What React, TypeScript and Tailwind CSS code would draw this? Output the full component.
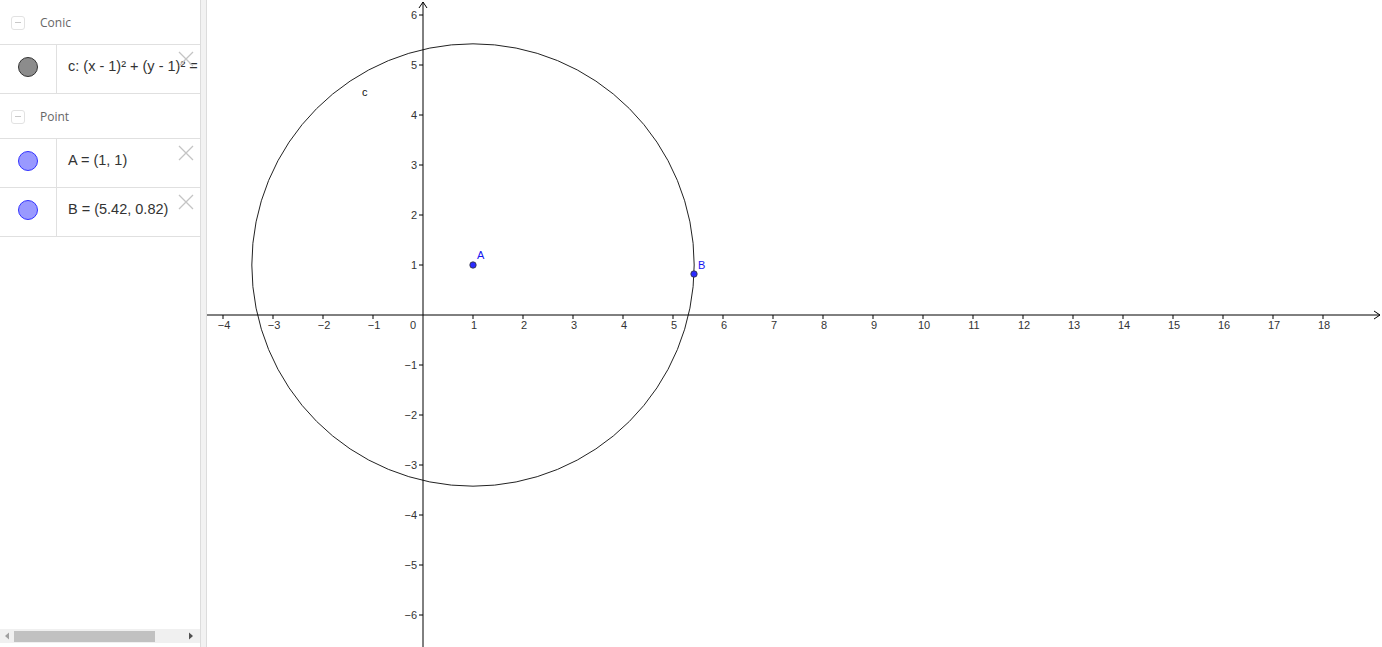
import React from 'react';

const OX = 216; // origin x inside canvas (screen 423)
const OY = 315;
const U = 50;

const xTicks = Array.from({ length: 23 }, (_, i) => i - 4).filter((v) => v !== 0);
const yTicks = Array.from({ length: 13 }, (_, i) => i - 6).filter((v) => v !== 0);

const fmt = (v: number) => (v < 0 ? `\u2212${-v}` : `${v}`);

function GroupHeader({ label }: { label: string }) {
  return (
    <div className="flex h-[45px] items-center border-b border-[#e0e0e0] pl-[11px] pt-[1px]">
      <div className="flex h-[14px] w-[14px] items-center justify-center rounded-[3px] border border-[#e2e2e2]">
        <div className="h-px w-[6px] bg-[#c8c8c8]" />
      </div>
      <span className="ml-[15px] text-[12px] text-[#666]">{label}</span>
    </div>
  );
}

function CloseIcon() {
  return (
    <svg width="16" height="16" viewBox="0 0 16 16" className="absolute right-[6px] top-[6px]">
      <path d="M1 1 L15 15 M15 1 L1 15" stroke="#c4c4c4" strokeWidth="1.3" />
    </svg>
  );
}

function ItemRow({ marker, text }: { marker: 'conic' | 'point'; text: string }) {
  return (
    <div className="relative flex h-[49px] border-b border-[#e0e0e0]">
      <div className="flex w-[57px] items-center justify-center border-r border-[#e0e0e0] pb-[4px]">
        {marker === 'conic' ? (
          <div className="h-[20px] w-[20px] rounded-full border border-[#333] bg-[#8c8c8c]" />
        ) : (
          <div className="h-[20px] w-[20px] rounded-full border border-[#3333ff] bg-[#9999ff]" />
        )}
      </div>
      <div className="flex flex-1 items-center overflow-hidden whitespace-nowrap pb-[4px] pl-[11px] font-['Liberation_Sans',sans-serif] text-[14.5px] text-[#333]">
        {text}
      </div>
      <CloseIcon />
    </div>
  );
}

function Sidebar() {
  return (
    <div className="relative flex h-full w-[200px] flex-col bg-white font-['Open_Sans',sans-serif]">
      <GroupHeader label="Conic" />
      <ItemRow marker="conic" text="c: (x - 1)² + (y - 1)² =" />
      <GroupHeader label="Point" />
      <ItemRow marker="point" text="A = (1, 1)" />
      <ItemRow marker="point" text="B = (5.42, 0.82)" />
      <div className="flex-1" />
      <div className="mb-[4px] flex h-[14px] items-center bg-[#f0f0f0]">
        <svg width="14" height="14" viewBox="0 0 14 14">
          <path d="M5 7 L9 3.5 L9 10.5 Z" fill="#a0a0a0" />
        </svg>
        <div className="h-[11px] w-[141px] bg-[#c1c1c1]" />
        <div className="flex-1" />
        <svg width="14" height="14" viewBox="0 0 14 14" className="mr-[2px]">
          <path d="M9 7 L5 3.5 L5 10.5 Z" fill="#505050" />
        </svg>
      </div>
    </div>
  );
}

function Graph() {
  const W = 1175;
  const H = 647;
  const cx = OX + 1 * U;
  const cy = OY - 1 * U;
  const r = Math.hypot(4.42, 0.18) * U;
  const bx = OX + 5.42 * U;
  const by = OY - 0.82 * U;
  return (
    <svg width={W} height={H} className="block font-['Liberation_Sans',sans-serif]">
      <circle cx={cx} cy={cy} r={r} fill="none" stroke="#222" strokeWidth="1" />
      <line x1={0} y1={OY} x2={W - 2} y2={OY} stroke="#000" strokeWidth="1" />
      <path d={`M${W - 8} ${OY - 4} L${W - 2} ${OY} L${W - 8} ${OY + 4}`} fill="none" stroke="#000" />
      <line x1={OX} y1={2} x2={OX} y2={H} stroke="#000" strokeWidth="1" />
      <path d={`M${OX - 4} 8 L${OX} 2 L${OX + 4} 8`} fill="none" stroke="#000" />
      {xTicks.map((v) => (
        <g key={`x${v}`}>
          <line x1={OX + v * U} y1={OY} x2={OX + v * U} y2={OY + 4} stroke="#000" />
          <text x={OX + v * U + 1} y={OY + 14} fontSize="11" textAnchor="middle" fill="#333">
            {fmt(v)}
          </text>
        </g>
      ))}
      <text x={OX - 10} y={OY + 14} fontSize="11" textAnchor="middle" fill="#333">0</text>
      {yTicks.map((v) => (
        <g key={`y${v}`}>
          <line x1={OX - 4} y1={OY - v * U} x2={OX} y2={OY - v * U} stroke="#000" />
          <text x={OX - 6} y={OY - v * U + 4} fontSize="11" textAnchor="end" fill="#333">
            {fmt(v)}
          </text>
        </g>
      ))}
      <text x={155} y={96} fontSize="11" fill="#111">c</text>
      <circle cx={cx} cy={cy} r={3.2} fill="#2b2bff" stroke="#333" strokeWidth="0.8" />
      <text x={cx + 4} y={cy - 6} fontSize="11" fill="#1515f0">A</text>
      <circle cx={bx} cy={by} r={3.2} fill="#2b2bff" stroke="#333" strokeWidth="0.8" />
      <text x={bx + 4} y={by - 5} fontSize="11" fill="#1515f0">B</text>
    </svg>
  );
}

export default function App() {
  return (
    <div className="flex h-[647px] w-[1382px] overflow-hidden bg-white">
      <Sidebar />
      <div className="h-full w-[7px] border-x border-[#dcdcdc] bg-[#f2f2f2]" />
      <div className="flex-1">
        <Graph />
      </div>
    </div>
  );
}
